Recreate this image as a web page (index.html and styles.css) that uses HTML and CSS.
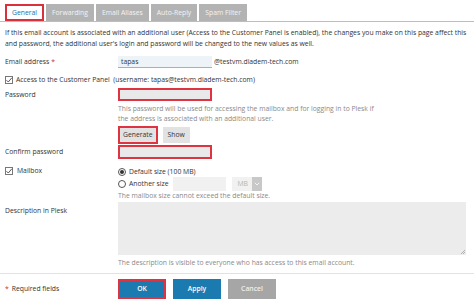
FILE: index.html
```html
<!DOCTYPE html>
<html lang="en">
<head>
    <meta charset="UTF-8">
    <title>Mail account - General</title>
    <link rel="stylesheet" href="styles.css">
</head>
<body>
    <div class="tabs">
        <span class="tab active">General</span>
        <span class="tab">Forwarding</span>
        <span class="tab">Email Aliases</span>
        <span class="tab">Auto-Reply</span>
        <span class="tab">Spam Filter</span>
    </div>

    <p class="intro">If this email account is associated with an additional user (Access to the Customer Panel is enabled), the changes you make on this page affect this and password, the additional user's login and password will be changed to the new values as well.</p>

    <div class="row row-email">
        <div class="label">Email address <span class="req">*</span></div>
        <div class="field inline">
            <div class="input email-input">tapas</div>
            <span class="domain">@testvm.diadem-tech.com</span>
        </div>
    </div>

    <div class="row-check">
        <span class="check"><svg viewBox="0 0 8 8" width="8" height="8"><path d="M1.5 4.2 L3.3 6 L6.8 1.8" fill="none" stroke="#444" stroke-width="0.9"/></svg></span>
        <span>Access to the Customer Panel &nbsp;(username: tapas@testvm.diadem-tech.com)</span>
    </div>

    <div class="row row-pass">
        <div class="label">Password</div>
        <div class="field">
            <div class="input pass-input marked"></div>
            <p class="hint hint-pass">This password will be used for accessing the mailbox and for logging in to Plesk if the address is associated with an additional user.</p>
            <div class="pass-buttons">
                <span class="btn-light marked">Generate</span>
                <span class="btn-light">Show</span>
            </div>
        </div>
    </div>

    <div class="row row-confirm">
        <div class="label">Confirm password</div>
        <div class="field">
            <div class="input pass-input marked"></div>
        </div>
    </div>

    <div class="row row-mailbox">
        <div class="label label-check">
            <span class="check"><svg viewBox="0 0 8 8" width="8" height="8"><path d="M1.5 4.2 L3.3 6 L6.8 1.8" fill="none" stroke="#444" stroke-width="0.9"/></svg></span>
            Mailbox
        </div>
        <div class="field">
            <div class="radio-line">
                <span class="radio on"></span> Default size (100 MB)
            </div>
            <div class="radio-line">
                <span class="radio"></span> Another size
                <span class="size-input"></span>
                <span class="unit">MB <span class="arrow"><svg viewBox="0 0 6 4" width="6" height="4"><path d="M0.8 0.8 L3 3 L5.2 0.8" fill="none" stroke="#fff" stroke-width="0.8"/></svg></span></span>
            </div>
            <p class="hint">The mailbox size cannot exceed the default size.</p>
        </div>
    </div>

    <div class="row row-desc">
        <div class="label">Description in Plesk</div>
        <div class="field">
            <div class="textarea"><span class="grip"></span></div>
            <p class="hint">The description is visible to everyone who has access to this email account.</p>
        </div>
    </div>

    <div class="row footer">
        <div class="label"><span class="req">*</span> Required fields</div>
        <div class="field actions">
            <span class="btn btn-primary marked">OK</span>
            <span class="btn btn-primary">Apply</span>
            <span class="btn btn-cancel">Cancel</span>
        </div>
    </div>
</body>
</html>
```

FILE: styles.css
```css
body {
    margin: 0;
    padding: 0;
    background: #ffffff;
    color: #333333;
    font-family: "Open Sans", "Noto Sans", sans-serif;
    font-size: 6.8px;
    line-height: 10px;
    width: 474px;
    height: 305px;
    overflow: hidden;
}

p {
    margin: 0;
}

.tabs {
    display: flex;
    gap: 2px;
    padding: 4px 0 0 5px;
    height: 17px;
    border-bottom: 1px solid #a9c3d0;
}

.tab {
    display: flex;
    align-items: center;
    padding: 0 6px;
    background: #b3b3b3;
    color: #f4f4f4;
    height: 17px;
    box-sizing: border-box;
}

.tab.active {
    background: #ffffff;
    color: #2b6f9e;
    border: 2px solid #d9303c;
    padding: 0 5px;
}

.intro {
    padding: 6px 2px 0 5px;
    line-height: 10.5px;
}

.row {
    display: grid;
    grid-template-columns: 113px 1fr;
    padding-left: 5px;
}

.label {
    display: flex;
    align-items: flex-start;
}

.req {
    color: #d42a2a;
    margin-left: 2px;
}

.footer .req {
    margin: 0 3px 0 0;
}

.inline {
    display: flex;
    align-items: center;
}

.input {
    box-sizing: border-box;
    background: #e9e9e9;
}

.row-email {
    margin-top: 7px;
    align-items: center;
}

.email-input {
    width: 94px;
    height: 12px;
    background: #eef3f8;
    border-bottom: 1px solid #8fb6d4;
    padding-left: 3px;
    line-height: 11px;
}

.domain {
    margin-left: 2px;
}

.row-check {
    display: flex;
    align-items: center;
    gap: 3px;
    padding-left: 5px;
    margin-top: 7px;
    height: 10px;
}

.check {
    width: 8px;
    height: 8px;
    box-sizing: border-box;
    border: 1px solid #777777;
    display: inline-flex;
    align-items: center;
    justify-content: center;
    background: #ffffff;
}

.check svg {
    flex: none;
}

.row-pass {
    margin-top: 3px;
    align-items: start;
}

.row-pass .label,
.row-confirm .label {
    padding-top: 2px;
}

.pass-input {
    width: 94px;
    height: 13px;
}

.row-confirm .pass-input {
    height: 14px;
}

.marked {
    border: 2px solid #de3340;
}

.hint {
    color: #8a8a8a;
    line-height: 9.5px;
}

.hint-pass {
    margin-top: 3px;
    width: 262px;
}

.pass-buttons {
    display: flex;
    align-items: center;
    gap: 5px;
    margin-top: 3px;
}

.btn-light {
    display: flex;
    align-items: center;
    justify-content: center;
    background: #e2e2e2;
    color: #333333;
    height: 16px;
    padding: 0 5px;
    box-sizing: border-box;
}

.btn-light.marked {
    height: 18px;
    padding: 0 3px;
}

.row-confirm {
    margin-top: 1px;
}

.row-mailbox {
    margin-top: 7px;
}

.label-check {
    gap: 4px;
    align-items: center;
    height: 10px;
}

.radio-line {
    display: flex;
    align-items: center;
    gap: 3px;
    height: 12px;
}

.radio {
    width: 8px;
    height: 8px;
    border-radius: 50%;
    border: 1px solid #555555;
    box-sizing: border-box;
    display: inline-flex;
    align-items: center;
    justify-content: center;
}

.radio.on::after {
    content: "";
    width: 4px;
    height: 4px;
    border-radius: 50%;
    background: #333333;
}

.size-input {
    width: 53px;
    height: 14px;
    background: #f1f1f1;
    margin-left: 2px;
}

.unit {
    display: flex;
    align-items: center;
    height: 14px;
    background: #f1f1f1;
    color: #b5b5b5;
    margin-left: 3px;
    padding-left: 5px;
    gap: 4px;
}

.arrow {
    width: 10px;
    height: 14px;
    background: #c8c8c8;
    display: flex;
    align-items: center;
    justify-content: center;
}

.row-mailbox .hint {
    margin-top: 1px;
}

.row-desc {
    margin-top: 1px;
}

.row-desc .label {
    padding-top: 4px;
}

.textarea {
    width: 348px;
    height: 53px;
    background: #ececec;
    position: relative;
}

.grip {
    position: absolute;
    right: 1px;
    bottom: 1px;
    width: 4px;
    height: 4px;
    background: linear-gradient(135deg, transparent 45%, #b0b0b0 45%, #b0b0b0 55%, transparent 55%, transparent 70%, #b0b0b0 70%, #b0b0b0 80%, transparent 80%);
}

.row-desc .hint {
    margin-top: 3px;
}

.footer {
    border-top: 1px solid #e2e2e2;
    margin-top: 6px;
    padding-top: 5px;
}

.footer .label {
    align-items: center;
}

.actions {
    display: flex;
    gap: 7px;
}

.btn {
    display: flex;
    align-items: center;
    justify-content: center;
    width: 48px;
    height: 20px;
    box-sizing: border-box;
    color: #ffffff;
    font-weight: 600;
}

.btn-primary {
    background: #1b7bb0;
}

.btn-cancel {
    background: #a6a6a6;
    color: #eeeeee;
}
```
